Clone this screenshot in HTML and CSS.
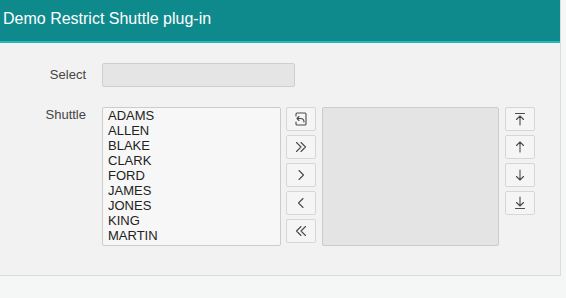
FILE: index.html
```html
<!DOCTYPE html>
<html lang="en">
<head>
  <meta charset="UTF-8" />
  <title>Demo Restrict Shuttle plug-in</title>
  <link rel="stylesheet" href="styles.css">
</head>
<body>
  <div class="app">
    <header class="header">Demo Restrict Shuttle plug-in</header>

    <div class="panel">
      <div class="row row-select">
        <label class="label">Select</label>
        <div class="select-box"></div>
      </div>

      <div class="row row-shuttle">
        <label class="label">Shuttle</label>
        <div class="shuttle">
          <ul class="list list-left">
            <li>ADAMS</li>
            <li>ALLEN</li>
            <li>BLAKE</li>
            <li>CLARK</li>
            <li>FORD</li>
            <li>JAMES</li>
            <li>JONES</li>
            <li>KING</li>
            <li>MARTIN</li>
            <li>MILLER</li>
          </ul>

          <div class="btns">
            <button class="btn" title="Reset">
              <svg width="16" height="16" viewBox="0 0 16 16"><path d="M3 5V3a1 1 0 0 1 1-1h8a1 1 0 0 1 1 1v10a1 1 0 0 1-1 1H4a1 1 0 0 1-1-1v-2" /><path d="M11 11c0-2.2-1.3-3.5-3.5-3.5H4M6 5.5l-2 2 2 2" /></svg>
            </button>
            <button class="btn" title="Move all">
              <svg width="16" height="16" viewBox="0 0 16 16"><path d="M3.5 3.5l4.5 4.5-4.5 4.5M8 3.5l4.5 4.5L8 12.5" /></svg>
            </button>
            <button class="btn" title="Move">
              <svg width="16" height="16" viewBox="0 0 16 16"><path d="M6 3.5l4.5 4.5L6 12.5" /></svg>
            </button>
            <button class="btn" title="Remove">
              <svg width="16" height="16" viewBox="0 0 16 16"><path d="M10 3.5L5.5 8l4.5 4.5" /></svg>
            </button>
            <button class="btn" title="Remove all">
              <svg width="16" height="16" viewBox="0 0 16 16"><path d="M8 3.5L3.5 8 8 12.5M12.5 3.5L8 8l4.5 4.5" /></svg>
            </button>
          </div>

          <ul class="list list-right"></ul>

          <div class="btns">
            <button class="btn" title="Top">
              <svg width="16" height="16" viewBox="0 0 16 16"><path d="M3.5 2.5h9M8 5v9M4.5 8.5L8 5l3.5 3.5" /></svg>
            </button>
            <button class="btn" title="Up">
              <svg width="16" height="16" viewBox="0 0 16 16"><path d="M8 3v10M4.5 6.5L8 3l3.5 3.5" /></svg>
            </button>
            <button class="btn" title="Down">
              <svg width="16" height="16" viewBox="0 0 16 16"><path d="M8 3v10M4.5 9.5L8 13l3.5-3.5" /></svg>
            </button>
            <button class="btn" title="Bottom">
              <svg width="16" height="16" viewBox="0 0 16 16"><path d="M8 2v9M4.5 7.5L8 11l3.5-3.5M3.5 13.5h9" /></svg>
            </button>
          </div>
        </div>
      </div>
    </div>
  </div>
</body>
</html>
```

FILE: styles.css
```css
body {
  margin: 0;
  background: #f5f6f6;
  font-family: 'Liberation Sans', Arial, sans-serif;
  color: #222;
}
.app {
  width: 560px;
  border-right: 1px solid #dcdcdc;
}
.header {
  height: 41px;
  line-height: 37px;
  padding-left: 3px;
  background: #0f8a8c;
  border-bottom: 2px solid #2ab5ba;
  color: #fff;
  font-size: 16px;
}
.panel {
  background: #f2f2f2;
  height: 233px;
  padding-top: 20px;
  border-bottom: 1px solid #dcdcdc;
  box-sizing: border-box;
}
.row {
  display: flex;
  gap: 16px;
}
.label {
  width: 86px;
  text-align: right;
  font-size: 13px;
  color: #444;
}
.row-select .label {
  line-height: 24px;
}
.row-shuttle {
  margin-top: 20px;
}
.row-shuttle .label {
  line-height: 16px;
}
.select-box {
  width: 191px;
  height: 22px;
  background: #e5e5e5;
  border: 1px solid #cfcfcf;
  border-radius: 2px;
}
.shuttle {
  display: flex;
}
.list {
  margin: 0;
  padding: 0 0 0 5px;
  list-style: none;
  width: 172px;
  height: 137px;
  overflow: hidden;
  border: 1px solid #cccccc;
  border-radius: 2px;
  background: #f7f7f7;
  font-size: 13px;
  line-height: 15px;
}
.list-right {
  width: 175px;
  background: #e4e4e4;
  padding: 0;
  margin: 0 6px;
}
.list-left {
  margin-right: 5px;
}
.btns {
  display: flex;
  flex-direction: column;
  gap: 4px;
}
.btn {
  width: 30px;
  height: 24px;
  padding: 0;
  display: flex;
  align-items: center;
  justify-content: center;
  background: #f5f5f5;
  border: 1px solid #d6d6d6;
  border-radius: 2px;
}
.btn svg {
  fill: none;
  stroke: #4a4a4a;
  stroke-width: 1.1;
  stroke-linecap: round;
  stroke-linejoin: round;
}
```
